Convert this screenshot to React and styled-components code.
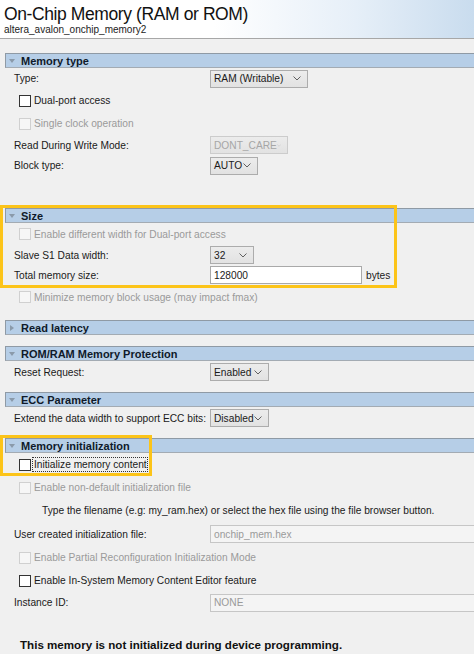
import React from "react";
import styled, { createGlobalStyle } from "styled-components";

const GlobalStyle = createGlobalStyle`
  html, body {
    margin: 0;
    padding: 0;
    background: #f0f0f0;
  }
  * {
    box-sizing: border-box;
  }
`;

const Chevron = ({ disabled }) => (
  <svg width="8" height="5" viewBox="0 0 8 5">
    <polyline
      points="0.5,0.5 4,4 7.5,0.5"
      fill="none"
      stroke={disabled ? "#c4c4c4" : "#606060"}
      strokeWidth="1"
    />
  </svg>
);

const Triangle = ({ open }) => (
  <svg width="6" height="6" viewBox="0 0 6 6">
    {open ? (
      <polygon points="0,1 6,1 3,5" fill="#8a9aaa" />
    ) : (
      <polygon points="1,0 5,3 1,6" fill="#8a9aaa" />
    )}
  </svg>
);

const Section = ({ title, open = true, top, highlight, children }) => (
  <SectionWrap top={top}>
    <SectionHeader>
      <Triangle open={open} />
      <span>{title}</span>
    </SectionHeader>
    {children}
    {highlight && <Highlight {...highlight} />}
  </SectionWrap>
);

const Check = ({ label, disabled, focused, h }) => (
  <CheckRow h={h} disabled={disabled}>
    <Box disabled={disabled} />
    <CheckText focused={focused}>{label}</CheckText>
  </CheckRow>
);

const Dropdown = ({ value, w, disabled }) => (
  <Select w={w} disabled={disabled}>
    <span>{value}</span>
    <Chevron disabled={disabled} />
  </Select>
);

const App = () => {
  return (
    <>
      <GlobalStyle />
      <Page>
        <TitleBar>
          <Title>On-Chip Memory (RAM or ROM)</Title>
          <Subtitle>altera_avalon_onchip_memory2</Subtitle>
        </TitleBar>

        <Content>
          <Section title="Memory type" top={14}>
            <Row h={21}>
              <Label>Type:</Label>
              <Dropdown value="RAM (Writable)" w={98} />
            </Row>
            <Check h={23} label="Dual-port access" />
            <Check h={23} label="Single clock operation" disabled />
            <Row h={20}>
              <Label>Read During Write Mode:</Label>
              <Dropdown value="DONT_CARE" w={78} disabled />
            </Row>
            <Row h={21}>
              <Label>Block type:</Label>
              <Dropdown value="AUTO" w={48} />
            </Row>
          </Section>

          <Section
            title="Size"
            top={32}
            highlight={{ w: 397, h: 83 }}
          >
            <Check
              h={22}
              label="Enable different width for Dual-port access"
              disabled
            />
            <Row h={20}>
              <Label>Slave S1 Data width:</Label>
              <Dropdown value="32" w={44} />
            </Row>
            <Row h={20}>
              <Label>Total memory size:</Label>
              <Field>
                <TextInput w={152}>128000</TextInput>
                <Unit>bytes</Unit>
              </Field>
            </Row>
            <Check
              h={24}
              label="Minimize memory block usage (may impact fmax)"
              disabled
            />
          </Section>

          <Section title="Read latency" open={false} top={11} />

          <Section title="ROM/RAM Memory Protection" top={11}>
            <Row h={22}>
              <Label>Reset Request:</Label>
              <Dropdown value="Enabled" w={59} />
            </Row>
          </Section>

          <Section title="ECC Parameter" top={9}>
            <Row h={22}>
              <Label>Extend the data width to support ECC bits:</Label>
              <Dropdown value="Disabled" w={59} />
            </Row>
          </Section>

          <Section
            title="Memory initialization"
            top={9}
            highlight={{ w: 152, h: 41 }}
          >
            <Check h={23} label="Initialize memory content" focused />
            <Check h={23} label="Enable non-default initialization file" disabled />
            <Hint>
              Type the filename (e.g: my_ram.hex) or select the hex file using
              the file browser button.
            </Hint>
            <Row h={24}>
              <Label>User created initialization file:</Label>
              <TextInput disabled>onchip_mem.hex</TextInput>
            </Row>
            <Check
              h={23}
              label="Enable Partial Reconfiguration Initialization Mode"
              disabled
            />
            <Check h={23} label="Enable In-System Memory Content Editor feature" />
            <Row h={21}>
              <Label>Instance ID:</Label>
              <TextInput disabled>NONE</TextInput>
            </Row>
          </Section>

          <Notice>This memory is not initialized during device programming.</Notice>
        </Content>
      </Page>
    </>
  );
};

const Page = styled.div`
  width: 474px;
  height: 654px;
  overflow: hidden;
  background: #f0f0f0;
  font-family: "Liberation Sans", Arial, sans-serif;
  font-size: 10.2px;
  color: #1a1a1a;
`;

const TitleBar = styled.div`
  height: 39px;
  padding: 5px 0 0 4px;
  background: linear-gradient(
    to right,
    #ffffff 0%,
    #ffffff 45%,
    #e6eff8 75%,
    #c9dcee 100%
  );
  border-bottom: 1px solid #a7a7a7;
`;

const Title = styled.div`
  font-size: 17.5px;
  line-height: 19px;
  color: #111;
  letter-spacing: -0.4px;
`;

const Subtitle = styled.div`
  font-size: 10px;
  line-height: 11px;
  color: #222;
`;

const Content = styled.div`
  padding-left: 5px;
`;

const SectionWrap = styled.div`
  position: relative;
  margin-top: ${(p) => p.top}px;
`;

const SectionHeader = styled.div`
  height: 15px;
  display: flex;
  align-items: center;
  gap: 6px;
  padding-left: 3px;
  background: #b6cee7;
  border-top: 1px solid #8f9aa5;
  border-bottom: 1px solid #a3abb3;
  border-left: 1px solid #8f9aa5;
  font-weight: bold;
  font-size: 11px;
  color: #0f1a2a;
`;

const Highlight = styled.div`
  position: absolute;
  top: -3px;
  left: -5px;
  width: ${(p) => p.w}px;
  height: ${(p) => p.h}px;
  border: 3px solid #fcc419;
  pointer-events: none;
`;

const Row = styled.div`
  height: ${(p) => p.h}px;
  display: grid;
  grid-template-columns: 196px 1fr;
  align-items: center;
  padding-left: 9px;
`;

const Label = styled.span`
  white-space: nowrap;
`;

const CheckRow = styled.div`
  height: ${(p) => p.h}px;
  display: flex;
  align-items: center;
  gap: 1px;
  padding-left: 14px;
  color: ${(p) => (p.disabled ? "#9a9a9a" : "#1a1a1a")};
`;

const Box = styled.span`
  width: 12px;
  height: 12px;
  flex: none;
  background: ${(p) => (p.disabled ? "#f6f6f6" : "#ffffff")};
  border: 1px solid ${(p) => (p.disabled ? "#d0d0d0" : "#333333")};
`;

const CheckText = styled.span`
  white-space: nowrap;
  padding: 1px 0 1px 1px;
  border: 1px dotted ${(p) => (p.focused ? "#333" : "transparent")};
`;

const Select = styled.div`
  width: ${(p) => p.w}px;
  height: 18px;
  display: flex;
  align-items: center;
  justify-content: space-between;
  padding: 0 6px 0 3px;
  background: linear-gradient(#ececec, #e2e2e2);
  border: 1px solid ${(p) => (p.disabled ? "#cccccc" : "#acacac")};
  color: ${(p) => (p.disabled ? "#a6a6a6" : "#1a1a1a")};
  white-space: nowrap;
`;

const Field = styled.div`
  display: flex;
  align-items: center;
  gap: 4px;
`;

const TextInput = styled.div`
  width: ${(p) => (p.w ? `${p.w}px` : "calc(100% + 4px)")};
  height: 18px;
  display: flex;
  align-items: center;
  padding-left: 3px;
  background: ${(p) => (p.disabled ? "#f4f4f4" : "#ffffff")};
  border: 1px solid ${(p) => (p.disabled ? "#c6c6c6" : "#a9a9a9")};
  border-right: ${(p) => (p.disabled ? "none" : undefined)};
  color: ${(p) => (p.disabled ? "#9a9a9a" : "#1a1a1a")};
  white-space: nowrap;
`;

const Unit = styled.span`
  color: #1a1a1a;
`;

const Hint = styled.div`
  height: 23px;
  display: flex;
  align-items: center;
  padding-left: 37px;
  white-space: nowrap;
`;

const Notice = styled.div`
  margin-top: 25px;
  padding-left: 15px;
  font-weight: bold;
  font-size: 11.6px;
  color: #111;
  white-space: nowrap;
`;

export default App;
